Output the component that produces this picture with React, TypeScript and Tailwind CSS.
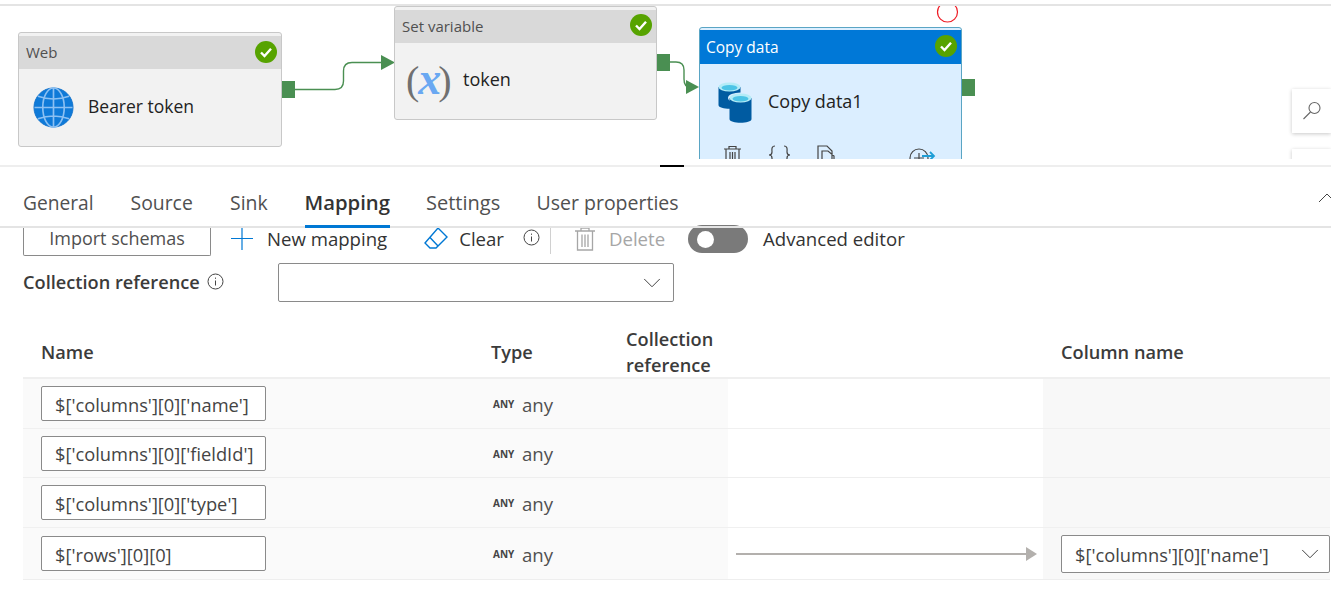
import React from "react";
import { ChevronDown } from "lucide-react";

function Check({ className }: { className: string }) {
  return (
    <svg className={className} width="22" height="22" viewBox="0 0 22 22">
      <circle cx="11" cy="11" r="11" fill="#57a300" />
      <path d="M6 11.500 L9.500 15 L16 7.800" fill="none" stroke="#fff" strokeWidth="2.4" />
    </svg>
  );
}

function InfoIcon({ className }: { className: string }) {
  return (
    <svg className={className} width="17" height="17" viewBox="0 0 17 17" fill="none" stroke="#444" strokeWidth="1">
      <circle cx="8.500" cy="8.500" r="7.500" />
      <path d="M8.500 7.500 V12.500 M8.500 4.600 V5.800" />
    </svg>
  );
}

function Globe() {
  return (
    <svg className="absolute left-[14px] top-[54px]" width="41" height="41" viewBox="0 0 42 42" fill="none">
      <circle cx="21" cy="21" r="20" fill="#0f7ad8" stroke="#1272cc" />
      <g stroke="#8cc0f2" strokeWidth="1.7">
        <ellipse cx="21" cy="21" rx="11" ry="20" />
        <path d="M21 1 V41 M1.500 21 H40.500 M5 9.500 Q21 15 37 9.500 M5 32.500 Q21 27 37 32.500" />
      </g>
    </svg>
  );
}

function DbIcon() {
  const cyl = (x: number, y: number, h: number) => (
    <g>
      <path d={`M${x} ${y} V${y + h} C${x} ${y + h + 5} ${x + 22} ${y + h + 5} ${x + 22} ${y + h} V${y} Z`} fill="#005ba1" />
      <ellipse cx={x + 11} cy={y} rx="11" ry="4.500" fill="#b4ecf7" />
      <ellipse cx={x + 11} cy={y + 0.8} rx="8" ry="2.800" fill="#4cc4e6" />
    </g>
  );
  return (
    <svg className="absolute left-[18px] top-[54px]" width="36" height="42" viewBox="0 0 36 42">
      {cyl(0.5, 5, 18)}
      <ellipse cx="22.500" cy="16" rx="12.500" ry="5.500" fill="#dbeeff" />
      {cyl(11.5, 16, 21)}
    </svg>
  );
}

function Node({
  title, label, box, checkTop, labelClass, icon,
}: {
  title: string; label: string; box: string; checkTop: string; labelClass: string; icon: React.ReactNode;
}) {
  return (
    <div className={`absolute ${box} rounded-[3px] border border-[#c8c8c8] bg-[#f2f2f2] pt-[3px]`}>
      <div className="h-[33px] bg-[#d9d9d9] pl-[7px] text-[15px] leading-[32px] text-[#505050]">{title}</div>
      <Check className={`absolute right-[4px] ${checkTop}`} />
      {icon}
      <div className={`absolute leading-6 text-[#222] ${labelClass}`}>{label}</div>
    </div>
  );
}

function Canvas() {
  return (
    <div className="relative h-[159px] overflow-hidden">
      <svg className="absolute left-0 top-0" width="1331" height="159" fill="none">
        <path d="M295 89.500 H335 Q343.500 89.500 343.500 81 V71 Q343.500 62.500 352 62.500 H383" stroke="#4a8f52" strokeWidth="1.4" />
        <path d="M381 55 L395 62.500 L381 70 Z" fill="#4a8f52" />
        <path d="M670 62 H676 Q684 62 684 70 V79 Q684 87 690 87" stroke="#4a8f52" strokeWidth="1.4" />
        <path d="M686 80 L699 87 L686 94 Z" fill="#4a8f52" />
        <circle cx="947.500" cy="12" r="10" stroke="#ee1c25" strokeWidth="1.2" />
        <rect x="0" y="0" width="1331" height="4" fill="#fff" />
        <rect x="0" y="4" width="1331" height="2" fill="#e4e4e4" />
      </svg>
      <Node
        title="Web"
        label="Bearer token"
        box="left-[18px] top-[32px] h-[115px] w-[264px]"
        checkTop="top-[8px]"
        labelClass="left-[69px] top-[61px] text-[17.5px]"
        icon={<Globe />}
      />
      <div className="absolute left-[282px] top-[81px] h-[17px] w-[13px] bg-[#4a8f52]" />
      <Node
        title="Set variable"
        label="token"
        box="left-[394px] top-[6px] h-[114px] w-[263px]"
        checkTop="top-[7px]"
        labelClass="left-[68px] top-[60px] text-[18px]"
        icon={
          <div className="absolute left-[11px] top-[47px] flex items-baseline font-['Liberation_Serif',serif] text-[40px] leading-[50px] text-[#707070]">
            <span>(</span>
            <span className="-ml-[1px] -mr-[3px] text-[46px] font-bold italic leading-[50px] text-[#6aa8f2]">x</span>
            <span>)</span>
          </div>
        }
      />
      <div className="absolute left-[657px] top-[54px] h-[17px] w-[13px] bg-[#4a8f52]" />
      <div className="absolute left-[699px] top-[27px] h-[150px] w-[263px] rounded-[3px] border border-[#5aa5c4] bg-[#dbeeff] pt-[2px]">
        <div className="h-[34px] bg-[#0078d7] pl-[6px] text-[15.5px] font-medium leading-[34px] text-white">Copy data</div>
        <Check className="absolute right-[4px] top-[7px]" />
        <DbIcon />
        <div className="absolute left-[68px] top-[61px] text-[18px] leading-6 text-[#222]">Copy data1</div>
        <svg className="absolute left-[22px] top-[116px]" width="216" height="24" fill="none" stroke="#444" strokeWidth="1.2">
          <path d="M2 5 H19 M7 5 V2.500 H14 V5 M4 5 V22 H17 V5 M8 8 V20 M10.500 8 V20 M13 8 V20" />
          <path d="M53 2 C49 2 50 6 50 8 C50 10 49 11 47 11 C49 11 50 12 50 14 C50 17 50 21 53 21 M62 2 C66 2 65 6 65 8 C65 10 66 11 68 11 C66 11 65 12 65 14 C65 17 65 21 62 21" />
          <path d="M96 18 V2 H105 L110 7 V20 M100 7 H106 L112 12 V24 H100 Z" />
          <circle cx="197" cy="14" r="9" />
          <path d="M197 9 V19 M192 14 H202" />
          <path d="M200 12 H212 M208 8 L212 12 L208 16 M203 18 H212" stroke="#1e9ed6" strokeWidth="1.8" />
        </svg>
      </div>
      <div className="absolute left-[962px] top-[79px] h-[17px] w-[13px] bg-[#4a8f52]" />
      <div className="absolute left-[1292px] top-[89px] flex h-[44px] w-[39px] items-center justify-center bg-white shadow-[0_1px_4px_rgba(0,0,0,0.22)]">
        <svg width="20" height="20" viewBox="0 0 20 20" fill="none" stroke="#666" strokeWidth="1.1">
          <circle cx="12.500" cy="7" r="5.500" />
          <path d="M8.500 11 L1.500 18" />
        </svg>
      </div>
      <div className="absolute left-[1292px] top-[149px] h-[20px] w-[39px] bg-white shadow-[0_1px_4px_rgba(0,0,0,0.22)]" />
    </div>
  );
}

const tabs = [
  { name: "General", cls: "w-[71px] text-[19.2px] leading-[44px] border-transparent" },
  { name: "Source", cls: "w-[63px] text-[19.4px] leading-[44px] border-transparent" },
  { name: "Sink", cls: "w-[38px] text-[19.4px] leading-[44px] border-transparent" },
  { name: "Mapping", cls: "w-[85px] text-[20.3px] leading-[43px] font-semibold text-[#333] border-[#0078d4]" },
  { name: "Settings", cls: "w-[74px] text-[20px] leading-[44px] border-transparent" },
  { name: "User properties", cls: "w-[142px] text-[19.5px] leading-[44px] border-transparent" },
];

function Tabs() {
  return (
    <div className="relative flex h-[61px] items-end gap-[36.5px] border-b-2 border-[#e4e4e4] pl-[23px] text-[#505050]">
      {tabs.map((t) => (
        <div key={t.name} className={`-mb-[2px] h-[47px] whitespace-nowrap border-b-[3px] ${t.cls}`}>
          {t.name}
        </div>
      ))}
      <svg className="absolute right-0 top-[26px]" width="12" height="10" fill="none" stroke="#444" strokeWidth="1">
        <path d="M0 9 L8 1 L16 9" />
      </svg>
    </div>
  );
}

function Toolbar() {
  return (
    <div className="flex h-[29px] items-start text-[#333]">
      <div className="ml-[23px] flex h-[28px] w-[188px] items-start justify-center rounded-b-[2px] border border-t-0 border-[#8a8a8a] text-[18px] leading-[20px] text-[#505050]">
        Import schemas
      </div>
      <svg className="ml-[19px] -mt-[1px]" width="24" height="24" fill="none" stroke="#0078d4" strokeWidth="1.2">
        <path d="M12 1 V23 M1 11.500 H23" />
      </svg>
      <span className="ml-[13px] text-[18.6px] leading-[22px]">New mapping</span>
      <svg className="ml-[36px] -mt-[2px]" width="26" height="26" viewBox="0 0 26 26" fill="none" stroke="#0078d4" strokeWidth="1.4">
        <path d="M15 2 L24 11 L13 22 H7 L2 17 Z M7 11.500 L15 20" />
      </svg>
      <span className="ml-[10px] text-[18.6px] leading-[22px]">Clear</span>
      <InfoIcon className="ml-[19px] mt-px" />
      <div className="ml-[10px] h-[26px] w-px bg-[#d0d0d0]" />
      <svg className="ml-[24px] -mt-[1px]" width="20" height="24" viewBox="0 0 20 24" fill="none" stroke="#a6a6a6" strokeWidth="1.3">
        <path d="M0 4 H20 M6 4 V1 H14 V4 M2.500 4 V23 H17.500 V4 M7 7.500 V20 M10 7.500 V20 M13 7.500 V20" />
      </svg>
      <span className="ml-[14px] text-[18.6px] leading-[22px] text-[#a6a6a6]">Delete</span>
      <div className="ml-[23px] -mt-[3px] flex h-[28px] w-[60px] items-center rounded-full bg-[#7a7a7a] pl-[9px]">
        <div className="h-[17px] w-[17px] rounded-full bg-white" />
      </div>
      <span className="ml-[15px] text-[18.6px] leading-[22px] text-[#333]">Advanced editor</span>
    </div>
  );
}

function Select({ text, className }: { text: string; className: string }) {
  return (
    <div className={`flex items-center justify-between rounded-[2px] border border-[#8a8a8a] bg-white text-[18.3px] text-[#444] ${className}`}>
      <span className="pt-[2px]">{text}</span>
      <ChevronDown size={30} strokeWidth={0.8} color="#444" />
    </div>
  );
}

function TypeCell() {
  return (
    <div className="ml-[227px] flex items-center gap-[7px]">
      <span className="mt-[3px] w-[22px] text-[10px] font-bold text-[#444]">ANY</span>
      <span className="mt-[2px] text-[18.6px] text-[#505050]">any</span>
    </div>
  );
}

function Row({ name, height, border, children }: { name: string; height: string; border: string; children?: React.ReactNode }) {
  return (
    <div className={`flex ${height} border-b ${border}`}>
      <div className="flex w-[705px] items-center bg-[#fafafa] pl-[18px]">
        <div className="flex h-[35px] w-[225px] items-center rounded-[2px] border border-[#8a8a8a] bg-white pl-[13px] pt-[2px] text-[18.3px] text-[#444]">{name}</div>
        <TypeCell />
      </div>
      {children ?? (
        <>
          <div className="w-[315px] bg-white" />
          <div className="flex-1 bg-[#f8f8f8]" />
        </>
      )}
    </div>
  );
}

function Table() {
  return (
    <div className="ml-[23px] mr-px mt-[16px]">
      <div className="flex h-[61px] items-end border-b-2 border-[#efefef] text-[18.2px] font-semibold leading-[26px] text-[#3b3b3b]">
        <div className="w-[468px] pb-[12px] pl-[18px]">Name</div>
        <div className="w-[135px] pb-[12px]">Type</div>
        <div className="-mb-px w-[435px]">
          Collection
          <br />
          reference
        </div>
        <div className="pb-[12px]">Column name</div>
      </div>
      <Row name="$['columns'][0]['name']" height="h-[50px]" border="border-[#f0f0f0]" />
      <Row name="$['columns'][0]['fieldId']" height="h-[49px]" border="border-[#eeeeee]" />
      <Row name="$['columns'][0]['type']" height="h-[50px]" border="border-[#f0f0f0]" />
      <Row name="$['rows'][0][0]" height="h-[52px]" border="border-[#eeeeee]">
        <div className="flex w-[315px] items-center bg-white pl-[8px]">
          <div className="h-[2px] w-[290px] bg-[#b3b0ad]" />
          <svg width="11" height="14" viewBox="0 0 11 14">
            <path d="M0 0 L11 7 L0 14 Z" fill="#b3b0ad" />
          </svg>
        </div>
        <div className="flex flex-1 items-center bg-[#f8f8f8] pl-[18px]">
          <Select text="$['columns'][0]['name']" className="h-[38px] w-full pl-[13px] pr-[4px]" />
        </div>
      </Row>
    </div>
  );
}

export default function App() {
  return (
    <div className="relative h-[594px] w-[1331px] overflow-hidden bg-white font-['Open_Sans',sans-serif]">
      <Canvas />
      <div className="mt-[6px] h-[2px] bg-[#eeeeee]" />
      <div className="absolute left-[660px] top-[165px] h-[2px] w-[24px] bg-black" />
      <Tabs />
      <Toolbar />
      <div className="mt-[6px] flex items-center pl-[23px]">
        <span className="w-[184px] text-[18.2px] font-semibold text-[#3b3b3b]">Collection reference</span>
        <InfoIcon className="-mt-[3px]" />
        <Select text="" className="ml-[54px] h-[39px] w-[396px] pr-[6px]" />
      </div>
      <Table />
    </div>
  );
}
